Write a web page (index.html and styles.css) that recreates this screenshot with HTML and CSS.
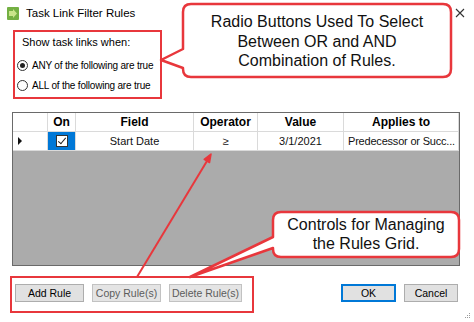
FILE: index.html
```html
<!DOCTYPE html>
<html lang="en">
<head>
  <meta charset="UTF-8" />
  <title>Task Link Filter Rules</title>
  <link rel="stylesheet" href="styles.css">
</head>
<body>

<div class="titlebar">
  <svg class="title-icon" width="12" height="13" viewBox="0 0 12 13">
    <rect x="0" y="0" width="12" height="13" rx="1" fill="#74b043"/>
    <path d="M2 4 H6 V2 L10 6.5 L6 11 V9 H2 Z" fill="#c9e58a"/>
  </svg>
  <span class="title">Task Link Filter Rules</span>
  <svg class="close" width="10" height="10" viewBox="0 0 10 10">
    <path d="M1 1 L9 9 M9 1 L1 9" stroke="#333" stroke-width="1.1"/>
  </svg>
</div>

<div class="content">
  <div class="options">
    <div class="legend">Show task links when:</div>
    <label class="radio-row"><span class="radio checked"></span>ANY of the following are true</label>
    <label class="radio-row"><span class="radio"></span>ALL of the following are true</label>
  </div>

  <div class="grid">
    <div class="rules">
      <div class="cell head"></div>
      <div class="cell head">On</div>
      <div class="cell head">Field</div>
      <div class="cell head">Operator</div>
      <div class="cell head">Value</div>
      <div class="cell head">Applies to</div>

      <div class="cell rowhead"><span class="caret"></span></div>
      <div class="cell on"><span class="check"></span></div>
      <div class="cell">Start Date</div>
      <div class="cell">≥</div>
      <div class="cell">3/1/2021</div>
      <div class="cell left">Predecessor or Succ...</div>
    </div>
  </div>
</div>

<div class="footer">
  <div class="rule-btns">
    <button class="btn add">Add Rule</button>
    <button class="btn copy" disabled>Copy Rule(s)</button>
    <button class="btn del" disabled>Delete Rule(s)</button>
  </div>
  <div class="dlg-btns">
    <button class="btn ok">OK</button>
    <button class="btn cancel">Cancel</button>
  </div>
</div>

<!-- annotations drawn over the dialog -->
<svg class="notes" width="474" height="322" viewBox="0 0 474 322">
  <path d="M191 4 H443 Q451 4 451 12 V69 Q451 77 443 77 H191 Q183 77 183 69 L183 68 L161 60 L183 49 V12 Q183 4 191 4 Z"
        fill="#fff" stroke="#e8373c" stroke-width="2.5" stroke-linejoin="round"/>
  <path d="M281 212 H451 Q459 212 459 220 V249 Q459 257 451 257 H281 Q273 257 273 249 L273 248 L190 277 L273 237 V220 Q273 212 281 212 Z"
        fill="#fff" stroke="#e8373c" stroke-width="2.5" stroke-linejoin="round"/>
  <line x1="137" y1="277" x2="207" y2="161" stroke="#e8373c" stroke-width="2"/>
  <polygon points="211,154 209.5,162.6 204.2,159.4" fill="#e8373c" stroke="#e8373c" stroke-width="1.5" stroke-linejoin="round"/>
  <g fill="#9a9a9a">
    <rect x="469" y="313" width="1" height="1"/>
    <rect x="467" y="315" width="1" height="1"/>
    <rect x="469" y="315" width="1" height="1"/>
    <rect x="465" y="317" width="1" height="1"/>
    <rect x="467" y="317" width="1" height="1"/>
    <rect x="469" y="317" width="1" height="1"/>
  </g>
</svg>

<div class="note note-radio">Radio Buttons Used To Select<br>Between OR and AND<br>Combination of Rules.</div>
<div class="note note-grid">Controls for Managing<br>the Rules Grid.</div>

</body>
</html>
```

FILE: styles.css
```css
* {
  box-sizing: border-box;
}

body {
  margin: 0;
  width: 474px;
  height: 322px;
  overflow: hidden;
  position: relative;
  background: #fff;
  color: #000;
  font-family: 'Liberation Sans', Arial, sans-serif;
}

.titlebar {
  display: flex;
  align-items: center;
  height: 26px;
  padding: 0 9px 0 7px;
  font-size: 11.5px;
}

.title-icon {
  margin-right: 7px;
}

.close {
  margin-left: auto;
}

.content {
  padding: 4px 14px 0 12px;
}

.options {
  margin-left: 1px;
  width: 149px;
  height: 69px;
  border: 2px solid #e8373c;
  padding: 3px 0 0 2px;
  font-size: 10px;
}

.legend {
  margin-left: 5px;
  line-height: 14px;
  font-size: 11px;
  margin-bottom: 9px;
}

.radio-row {
  display: flex;
  align-items: center;
  gap: 4px;
  height: 14px;
  margin-bottom: 6px;
  letter-spacing: -0.2px;
}

.radio {
  width: 11px;
  height: 11px;
  border: 1px solid #333;
  border-radius: 50%;
  display: flex;
  align-items: center;
  justify-content: center;
}

.radio.checked::after {
  content: "";
  width: 5px;
  height: 5px;
  border-radius: 50%;
  background: #222;
}

.grid {
  margin-top: 13px;
  width: 448px;
  height: 154px;
  border: 1px solid #6a6a6a;
  background: #ababab;
}

.rules {
  display: grid;
  grid-template-columns: 35px 28px 118px 64px 86px 115px;
  grid-template-rows: 19px 19px;
  background: #fff;
}

.cell {
  display: flex;
  align-items: center;
  justify-content: center;
  border-right: 1px solid #dadada;
  border-bottom: 1px solid #dadada;
  font-size: 11px;
  color: #111;
  white-space: nowrap;
  overflow: hidden;
}

.cell.head {
  font-weight: bold;
  font-size: 12px;
  color: #000;
}

.cell.left {
  justify-content: flex-start;
  padding-left: 4px;
  letter-spacing: -0.2px;
}

.cell.rowhead {
  justify-content: flex-start;
  padding-left: 5px;
}

.caret {
  width: 0;
  height: 0;
  border-top: 4px solid transparent;
  border-bottom: 4px solid transparent;
  border-left: 4px solid #111;
}

.cell.on {
  background: #0078d7;
}

.check {
  width: 12px;
  height: 12px;
  background: #fff;
  border: 1px solid #333;
  position: relative;
}

.check::after {
  content: "";
  position: absolute;
  left: 3px;
  top: 0px;
  width: 3px;
  height: 7px;
  border-right: 1.5px solid #222;
  border-bottom: 1.5px solid #222;
  transform: rotate(40deg);
}

.footer {
  display: flex;
  align-items: flex-start;
  margin-top: 10px;
  padding: 0 16px 0 10px;
}

.rule-btns {
  display: flex;
  gap: 8px;
  width: 244px;
  height: 37px;
  border: 2px solid #e8373c;
  padding: 6px 0 0 3px;
}

.dlg-btns {
  display: flex;
  gap: 8px;
  margin-left: auto;
  padding-top: 8px;
}

.btn {
  height: 18px;
  padding: 0;
  margin: 0;
  background: #e1e1e1;
  border: 1px solid #adadad;
  font-family: 'Liberation Sans', Arial, sans-serif;
  font-size: 10.5px;
  color: #000;
}

.btn:disabled {
  color: #5c5c5c;
  background: #e4e4e4;
  border-color: #c2c2c2;
}

.add, .copy {
  width: 69px;
}

.del {
  width: 73px;
}

.ok {
  width: 55px;
  border: 2px solid #0078d7;
}

.cancel {
  width: 54px;
}

.notes {
  position: absolute;
  top: 0;
  left: 0;
  pointer-events: none;
}

.note {
  position: absolute;
  text-align: center;
  font-size: 16px;
  color: #111;
}

.note-radio {
  left: 183px;
  width: 268px;
  top: 12px;
  line-height: 19.5px;
}

.note-grid {
  left: 273px;
  width: 186px;
  top: 216px;
  line-height: 18.5px;
}
```
